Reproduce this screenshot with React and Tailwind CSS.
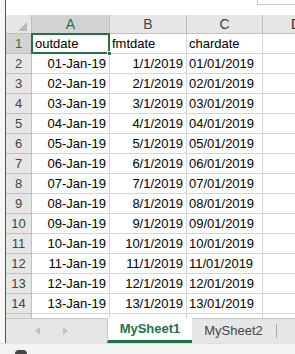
import React from "react";

const pad = (n) => String(n).padStart(2, "0");

const rows = Array.from({ length: 13 }, (_, i) => ({
    a: `${pad(i + 1)}-Jan-19`,
    b: `${i + 1}/1/2019`,
    c: `${pad(i + 1)}/01/2019`,
}));

export default function App() {
    return (
        <div className="w-[295px] h-[354px] overflow-hidden flex flex-col bg-white text-black" style={{ fontFamily: "'Liberation Sans', Arial, sans-serif" }}>
            <div className="flex flex-1 min-h-0">
                {/* left strip + green window edge */}
                <div className="w-[5px] bg-[#f7f7f7]"></div>
                <div className="w-px bg-[#217346]"></div>

                <div className="flex-1 flex flex-col min-w-0">
                    {/* formula bar edge */}
                    <div className="h-[15px] flex justify-end">
                        <div className="w-[38px] h-[5px] border-l border-b border-[#c6c6c6]"></div>
                    </div>

                    {/* column headers */}
                    <div className="h-[19px] flex bg-[#e6e6e6] border-b border-[#bfbfbf] text-[14px] text-[#444]">
                        <div className="w-[26px] border-r border-[#bfbfbf] flex items-end justify-end pr-[4px] pb-[2px]">
                            <div className="w-0 h-0 border-l-[9px] border-l-transparent border-b-[9px] border-b-[#b8b8b8]"></div>
                        </div>
                        <div className="w-[78px] border-r border-[#bfbfbf] bg-[#d2d2d2] text-[#217346] flex items-center justify-center">A</div>
                        <div className="w-[77px] border-r border-[#bfbfbf] flex items-center justify-center">B</div>
                        <div className="w-[76px] border-r border-[#bfbfbf] flex items-center justify-center">C</div>
                        <div className="flex-1 flex items-center justify-end text-[#3a1a1a] translate-x-[6px]">D</div>
                    </div>

                    {/* row 1 */}
                    <div className="h-[20px] flex text-[13px]">
                        <div className="w-[26px] bg-[#d2d2d2] border-r border-b border-[#bfbfbf] text-[#217346] flex items-center justify-center">1</div>
                        <div className="relative w-[78px] border-r border-b border-[#d4d4d4] flex items-center pl-[3px]">
                            outdate
                            <div className="absolute z-10 -left-px -top-px -right-[1px] -bottom-[1px] border-2 border-[#217346]"></div>
                            <div className="absolute z-20 -right-[3px] -bottom-[3px] w-[5px] h-[5px] bg-[#217346] border border-white"></div>
                        </div>
                        <div className="w-[77px] border-r border-b border-[#d4d4d4] flex items-center pl-[2px]">fmtdate</div>
                        <div className="w-[76px] border-r border-b border-[#d4d4d4] flex items-center pl-[2px]">chardate</div>
                        <div className="flex-1 border-b border-[#d4d4d4]"></div>
                    </div>

                    {rows.map((r, i) => (
                        <div key={i} className="h-[20px] flex text-[13px]">
                            <div className="w-[26px] bg-[#e6e6e6] border-r border-b border-[#bfbfbf] text-[#444] flex items-center justify-center">{i + 2}</div>
                            <div className="w-[78px] border-r border-b border-[#d4d4d4] flex items-center justify-end pr-[3px]">{r.a}</div>
                            <div className="w-[77px] border-r border-b border-[#d4d4d4] flex items-center justify-end pr-[3px]">{r.b}</div>
                            <div className="w-[76px] border-r border-b border-[#d4d4d4] flex items-center pl-[2px]">{r.c}</div>
                            <div className="flex-1 border-b border-[#d4d4d4]"></div>
                        </div>
                    ))}

                    {/* partial row 15 */}
                    <div className="flex-1 flex min-h-0">
                        <div className="w-[26px] bg-[#e6e6e6] border-r border-[#bfbfbf]"></div>
                        <div className="w-[78px] border-r border-[#d4d4d4]"></div>
                        <div className="w-[77px] border-r border-[#d4d4d4]"></div>
                        <div className="w-[76px] border-r border-[#d4d4d4]"></div>
                        <div className="flex-1"></div>
                    </div>

                    {/* sheet tabs */}
                    <div className="h-[25px] flex bg-[#e6e6e6] border-t border-[#c6c6c6]">
                        <div className="w-[101px] flex items-center">
                            <div className="ml-[29px] w-0 h-0 border-y-[4px] border-y-transparent border-r-[5px] border-r-[#c0c0c0]"></div>
                            <div className="ml-[23px] w-0 h-0 border-y-[4px] border-y-transparent border-l-[5px] border-l-[#c0c0c0]"></div>
                        </div>
                        <div className="w-[85px] -mt-px bg-white border-l border-[#c6c6c6] border-b-[3px] border-b-[#217346] flex items-center justify-center font-bold text-[13px] text-[#217346]">
                            MySheet1
                        </div>
                        <div className="w-[84px] flex items-center justify-center text-[13px] text-[#444] pr-[1px]">
                            MySheet2
                        </div>
                        <div className="w-px h-[14px] mt-[5px] bg-[#a6a6a6]"></div>
                    </div>
                </div>
            </div>

            {/* status bar */}
            <div className="h-[11px] bg-[#f3f3f3] border-t border-[#e0e0e0] flex items-end">
                <div className="ml-[15px] w-[12px] h-[4px] bg-[#444] rounded-t-sm"></div>
            </div>
        </div>
    );
}
